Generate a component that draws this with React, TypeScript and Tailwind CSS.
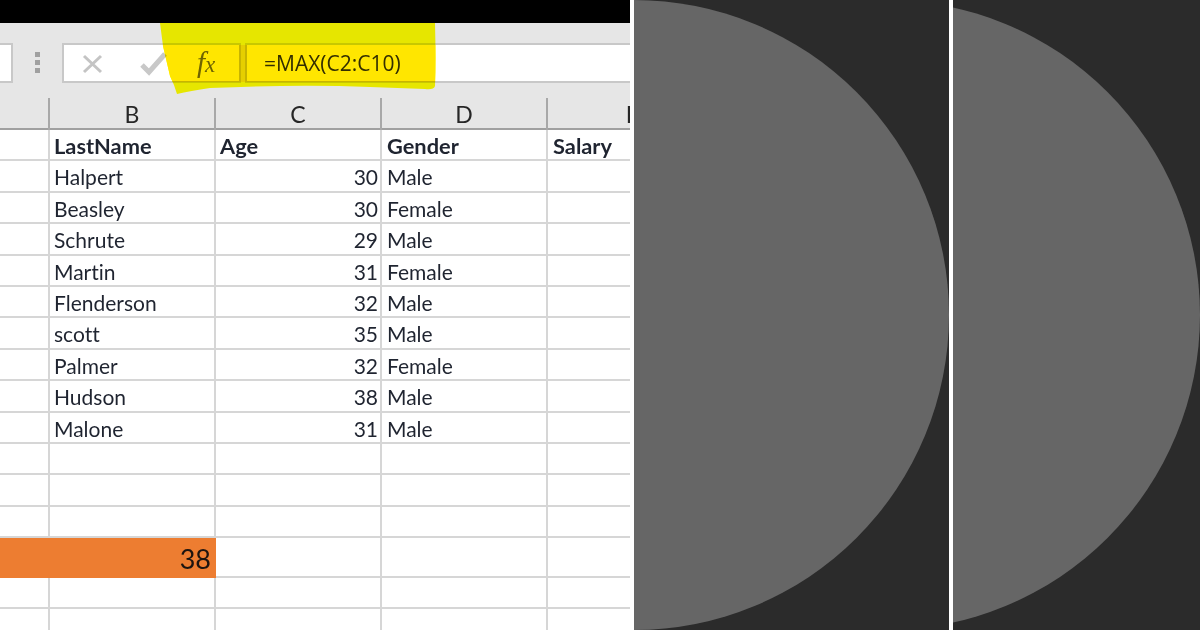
const rows = [
  ['Halpert', '30', 'Male'],
  ['Beasley', '30', 'Female'],
  ['Schrute', '29', 'Male'],
  ['Martin', '31', 'Female'],
  ['Flenderson', '32', 'Male'],
  ['scott', '35', 'Male'],
  ['Palmer', '32', 'Female'],
  ['Hudson', '38', 'Male'],
  ['Malone', '31', 'Male'],
  ['', '', ''],
  ['', '', ''],
  ['', '', ''],
]

function Row({ b, c, d, e, bold }: { b?: string; c?: string; d?: string; e?: string; bold?: boolean }) {
  const cell = 'border-r-2 border-[#d6d6d6] pl-[4px] pr-[2px] truncate'
  return (
    <div className={`grid grid-cols-[50px_166px_166px_166px_166px] h-[31.4px] shrink-0 border-b-2 border-[#d6d6d6] items-stretch leading-[31px] ${bold ? 'font-bold text-[21.8px]' : ''}`}>
      <div className={cell}></div>
      <div className={cell}>{b}</div>
      <div className={`${cell} ${bold ? 'text-left' : 'text-right'}`}>{c}</div>
      <div className={`${cell} pl-[5px]`}>{d}</div>
      <div className={`${cell} pl-[5px]`}>{e}</div>
    </div>
  )
}

function HeaderCell({ label, className }: { label?: string; className?: string }) {
  return (
    <div className={`border-r-2 border-[#a8a8a8] text-center text-[23px] leading-[33px] text-[#262626] mt-[1px] ${className ?? ''}`}>{label}</div>
  )
}

function FormulaBar() {
  return (
    <div className="h-[74px] bg-[#e6e6e6] flex items-center pt-[5px] shrink-0">
      <div className="w-[13px] h-[40px] bg-white border-2 border-l-0 border-[#c8c8c8]"></div>
      <div className="w-[49px] flex flex-col items-center gap-[3px] pr-[1px]">
        <div className="w-[5px] h-[5px] bg-[#a0a0a0]"></div>
        <div className="w-[5px] h-[5px] bg-[#a0a0a0]"></div>
        <div className="w-[5px] h-[5px] bg-[#a0a0a0]"></div>
      </div>
      <div className="w-[179px] h-[40px] bg-white border-2 border-[#c8c8c8] flex items-center">
        <svg width="178" height="36" viewBox="0 0 178 36" className="shrink-0">
          <path d="M20 11 L37 27 M37 11 L20 27" stroke="#c4c4c4" strokeWidth="3" fill="none" />
          <path d="M78 20 L85 27 L101 9" stroke="#c8c8c8" strokeWidth="5" fill="none" />
        </svg>
      </div>
      <div className="w-[4px]"></div>
      <div className="flex-1 h-[40px] bg-white border-2 border-r-0 border-[#c8c8c8] pl-[17px] text-[21px] leading-[36px] text-[#333] font-['Open_Sans',sans-serif]">
        =MAX(C2:C10)
      </div>
    </div>
  )
}

export default function App() {
  return (
    <div className="w-[1200px] h-[630px] flex bg-white overflow-hidden">
      <div className="relative w-[630px] h-[630px] shrink-0 overflow-hidden flex flex-col font-['Lato',sans-serif] text-[21px] text-[#1f2430] [font-variant-ligatures:none]">
        <div className="h-[23px] bg-black shrink-0"></div>
        <FormulaBar />
        <div className="grid grid-cols-[50px_166px_166px_166px_166px] h-[33px] shrink-0 bg-[#e6e6e6] border-b-2 border-[#a0a0a0]">
          <HeaderCell />
          <HeaderCell label="B" />
          <HeaderCell label="C" />
          <HeaderCell label="D" />
          <HeaderCell label="E" className="pl-[5px]" />
        </div>
        <Row b="LastName" c="Age" d="Gender" e="Salary" bold />
        {rows.map((r, i) => (
          <Row key={i} b={r[0]} c={r[1]} d={r[2]} />
        ))}
        <div className="grid grid-cols-[216px_166px_166px_166px] grid-rows-[38px] h-[40px] shrink-0 border-b-2 border-[#d6d6d6]">
          <div className="h-[40px] bg-[#ed7d31] text-right pr-[5px] text-[27px] leading-[41px] text-[#1c1410]">38</div>
          <div className="border-r-2 border-[#d6d6d6]"></div>
          <div className="border-r-2 border-[#d6d6d6]"></div>
          <div className="border-r-2 border-[#d6d6d6]"></div>
        </div>
        <Row />
        <Row />

        {/* fx sits under the marker stroke */}
        <span className="absolute left-[197px] top-[46px] font-['Liberation_Serif',serif] italic text-[29px] leading-[32px] text-[#6e6e1c]">
          f<span className="text-[23px]">x</span>
        </span>
        {/* yellow highlighter stroke */}
        <svg width="630" height="120" viewBox="0 0 630 120" className="absolute left-0 top-0 mix-blend-multiply">
          <defs>
            <clipPath id="marker">
              <path d="M160 23 L435 23 Q436 60 435 86 Q434 90 425 89 L370 87 Q300 84 210 88 Q190 91 177 94 Q174 84 170 76 L163 46 Z" />
            </clipPath>
          </defs>
          <path d="M160 23 L435 23 Q436 60 435 86 Q434 90 425 89 L370 87 Q300 84 210 88 Q190 91 177 94 Q174 84 170 76 L163 46 Z" fill="#ffff00" />
          <rect x="62" y="45" width="568" height="37" fill="#ffe600" clipPath="url(#marker)" />
        </svg>
      </div>
      <div className="w-[4px] shrink-0"></div>
      <div className="w-[315px] h-[630px] shrink-0 overflow-hidden bg-[#2b2b2b]">
        <div className="w-[630px] h-[630px] rounded-full bg-[#666666] -ml-[315px]"></div>
      </div>
      <div className="w-[4px] shrink-0"></div>
      <div className="w-[247px] h-[630px] shrink-0 overflow-hidden bg-[#2b2b2b]">
        <div className="w-[630px] h-[630px] rounded-full bg-[#666666] -ml-[383px]"></div>
      </div>
    </div>
  )
}
